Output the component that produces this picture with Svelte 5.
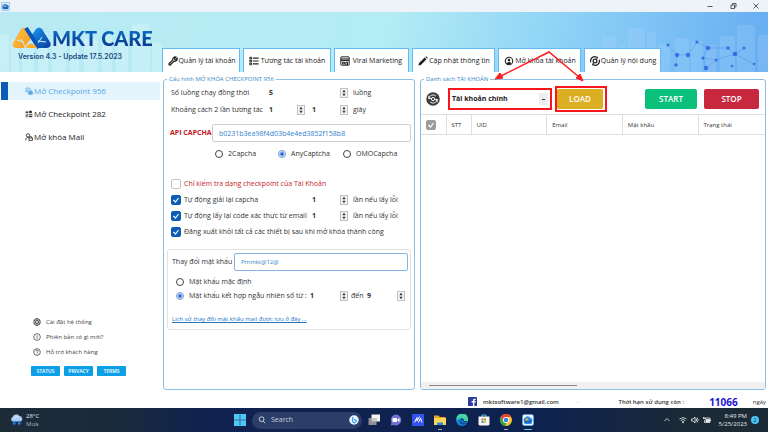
<script lang="ts">
	const tabs = [
		{ icon: 'wrench', label: 'Quản lý tài khoản', width: 78 },
		{ icon: 'list', label: 'Tương tác tài khoản', width: 88 },
		{ icon: 'store', label: 'Viral Marketing', width: 75 },
		{ icon: 'pencil', label: 'Cập nhật thông tin', width: 83 },
		{ icon: 'user', label: 'Mở khóa tài khoản', width: 83 },
		{ icon: 'sync', label: 'Quản lý nội dung', width: 77 }
	];

	const menu = [
		{ icon: 'copyLock', label: 'Mở Checkpoint 956' },
		{ icon: 'blocks', label: 'Mở Checkpoint 282' },
		{ icon: 'userLock', label: 'Mở khóa Mail' }
	];

	const helpLinks = [
		{ icon: 'gear', label: 'Cài đặt hệ thống' },
		{ icon: 'info', label: 'Phiên bản có gì mới?' },
		{ icon: 'help', label: 'Hỗ trợ khách hàng' }
	];

	const providers = ['2Capcha', 'AnyCaptcha', 'OMOCapcha'];
	const columns = ['STT', 'UID', 'Email', 'Mật khẩu', 'Trạng thái'];

	// x, y, width of each tower in the header skyline
	const towersLeft = [[0, 22, 9], [11, 27, 8], [22, 30, 12], [38, 20, 10], [52, 24, 14], [70, 30, 9], [84, 27, 14], [102, 23, 10], [116, 25, 12], [132, 12, 18], [152, 30, 10]];
	const towersRight = [[2, 24, 14], [18, 33, 8], [28, 16, 17], [47, 20, 9], [58, 32, 12], [75, 26, 14], [91, 29, 12], [106, 33, 10], [120, 24, 15], [137, 13, 18], [158, 23, 13]];
	const nodes = [[68, 33, 1.6], [77, 43, 2.2], [88, 43, 2.2], [97, 30, 1.6], [108, 36, 2.3], [76, 53, 1.8], [103, 46, 1.6], [106, 56, 2.3], [116, 48, 1.5], [128, 36, 1.8], [135, 42, 2.3], [144, 36, 1.6], [132, 54, 1.3], [154, 52, 1.3]];

	let selected = $state(0);
	let provider = $state('AnyCaptcha');
	let mode = $state('random');
	let apiKey = $state('b0231b3ea98f4d03b4e4ed3852f158b8');
	let password = $state('Pmmkt@12@');
	let onlyCheck = $state(false);
	let solveAgain = $state(true);
	let codeAgain = $state(true);
	let logoutAll = $state(true);
	let selectAll = $state(true);
	let values = $state({ threads: 5, from: 1, to: 1, solve: 1, code: 1, min: 1, max: 9 });
</script>

{#snippet glyph(name: string)}
	<svg class="glyph" viewBox="0 0 24 24" fill="none" stroke="currentColor" stroke-width="2.4" aria-hidden="true">
		{#if name === 'wrench'}
			<path d="M3 18 11.5 9.500A6 6 0 0 1 19 2.500L15.500 6l.5 2.500 2.500.5L22 5.500A6 6 0 0 1 14.500 12.500L6 21a2 2 0 0 1-3-3Z" stroke-width="2.8" />
		{:else if name === 'list'}
			<path d="M2 3h4v4H2zM2 10h4v4H2zM2 17h4v4H2z" />
			<path d="M9 5h14M9 12h14M9 19h14" stroke-width="2.8" />
		{:else if name === 'store'}
			<rect x="2" y="2" width="20" height="20" rx="1" />
			<path d="M2 7h20M2 11h20M6 15h5v4H6zM14 22v-7h4v7" />
			<path d="M5 8v3M10 8v3M15 8v3M19 8v3" />
		{:else if name === 'pencil'}
			<path d="m1 23 1.500-6L16 3.500 20.500 8 7 21.500ZM17.500 2l2-1.500L23.500 4.500 22 6.500Z" fill="currentColor" stroke="none" />
		{:else if name === 'user'}
			<circle cx="12" cy="12" r="9" stroke-width="2.6" />
			<circle cx="12" cy="9.500" r="3.200" fill="currentColor" stroke="none" />
			<path d="M6.500 18c1-5 10-5 11 0-3 3-8 3-11 0Z" fill="currentColor" stroke="none" />
		{:else if name === 'sync'}
			<circle cx="12" cy="12" r="4.500" stroke-width="3" />
			<path d="M2 15A10 10 0 0 1 16 2.800M22 9A10 10 0 0 1 8 21.200M2 9l3-5M22 15l-3 5M16 7l2-5M8 17l-2 5" stroke-width="2.8" />
		{:else if name === 'copyLock'}
			<path d="M3 16V3h9l4 4v2M7 16V9h6" />
			<rect x="11" y="13" width="11" height="9" rx="1" fill="currentColor" />
			<path d="M14 13v-2a3 3 0 0 1 5 0v2" />
		{:else if name === 'blocks'}
			<path d="M2 4h8v6H2zM12 2h9v8h-9zM2 12h8v10H2zM12 12h10v10H12z" fill="currentColor" stroke="#fff" stroke-width="1" />
			<path d="M6 12v10M12 16h10" stroke="#fff" />
		{:else if name === 'userLock'}
			<circle cx="9" cy="7" r="5" />
			<path d="M2 22c0-7 4-9 9-9" />
			<rect x="12" y="15" width="10" height="7" />
			<path d="M14 15v-2a3 3 0 0 1 6 0v2" />
		{:else if name === 'gear'}
			<path d="m12 1 9 5.500v11L12 23l-9-5.500v-11Z" stroke-width="3" />
			<circle cx="12" cy="12" r="4.500" stroke-width="3" />
			<path d="m4 7 4 2M20 7l-4 2M4 17l4-2M20 17l-4-2M12 2v5M12 17v5" />
		{:else if name === 'info'}
			<circle cx="12" cy="12" r="10" />
			<path d="M12 10v7M12 6v2" />
		{:else if name === 'help'}
			<circle cx="12" cy="12" r="10" />
			<path d="M8.500 10a3.500 3.500 0 1 1 5 3c-1 .6-1.500 1-1.500 2M12 17v2" />
		{/if}
	</svg>
{/snippet}

{#snippet stepper(key: keyof typeof values, label: string)}
	<input class="number" type="number" aria-label={label} bind:value={values[key]} />
	<span class="spin">
		<button aria-label="Tăng" onclick={() => values[key]++}><svg viewBox="0 0 6 5"><path d="m3 1 2 3H1Z" /></svg></button>
		<button aria-label="Giảm" onclick={() => values[key]--}><svg viewBox="0 0 6 5"><path d="M1 1h4L3 4Z" /></svg></button>
	</span>
{/snippet}

{#snippet careLogo()}
	<svg class="care" viewBox="0 0 16 16" aria-hidden="true">
		<rect x="0.5" y="0.5" width="15" height="15" rx="3" fill="#eaf5ff" stroke="#4c9fe4" />
		<path d="M3 10a3 3 0 0 1 1-5 4 4 0 0 1 7 0 3 3 0 0 1 2 5Z" fill="#2c8be8" />
		<rect x="3" y="8" width="10" height="5" rx="1" fill="#1668c8" />
		<path d="M4 8.500 6.500 5 9 8.500Z" fill="#ffb52e" />
	</svg>
{/snippet}

<div class="app">
	<div class="titlebar">
		{@render careLogo()}
		<div class="window-buttons">
			<button aria-label="Minimize"><svg viewBox="0 0 8 8"><path d="M1.500 4.500h5" /></svg></button>
			<button aria-label="Restore"><svg viewBox="0 0 8 8"><path d="M2 3h3.500v3.500H2zM3.500 3V1.500h3.500V5H5.500" /></svg></button>
			<button aria-label="Close"><svg viewBox="0 0 8 8"><path d="m1.500 1.500 5 5M6.500 1.500l-5 5" /></svg></button>
		</div>
	</div>

	<header>
		<svg class="skyline left" viewBox="0 0 164 60" aria-hidden="true">
			{#each towersLeft as [x, y, w]}
				<rect {x} {y} width={w} height={60 - y} rx="3" />
			{/each}
		</svg>
		<svg class="skyline right" viewBox="0 0 168 60" aria-hidden="true">
			{#each towersRight as [x, y, w]}
				<rect {x} {y} width={w} height={60 - y} rx="2" />
			{/each}
			<path d="m68 33 9 10h11l9-13 11 6-5 10 3 10M77 43l-1 10M108 36l20 0 7 6 9-6M103 46l13 2 19-6 19 10M106 56l10-8" />
			{#each nodes as [cx, cy, r]}
				<circle {cx} {cy} {r} />
			{/each}
		</svg>

		<div class="brand">
			<div class="brand-name">
				<svg viewBox="0 0 40 22" aria-hidden="true">
					<defs>
						<linearGradient id="gold" x1="0" y1="0" x2="1" y2="1"><stop stop-color="#ffc247" /><stop offset="1" stop-color="#f79a1e" /></linearGradient>
						<linearGradient id="blue" x1="0" y1="0" x2="1" y2="1"><stop stop-color="#1c9cf0" /><stop offset="1" stop-color="#0a3a9c" /></linearGradient>
					</defs>
					<path d="M9 2q3-3 6 0l5 8-8 11H4q-5-1-3-5Z" fill="url(#gold)" />
					<path d="M24 2q3-3 6 0l8 13q2 5-3 6h-8L19 9Z" fill="url(#blue)" />
					<path d="M14 1 27 21" stroke="#0a56b8" stroke-width="4" />
					<path d="M13 21q6-9 12 0Z" fill="#ffae2b" />
					<path d="m9 12 5 9M5 13l7 2M30 10l-4 6M26 14l8 1" stroke="#c8eef8" stroke-width="1" fill="none" />
				</svg>
				<strong>MKT CARE</strong>
			</div>
			<p>Version 4.3 - Update 17.5.2023</p>
		</div>

		<nav class="tabs">
			{#each tabs as tab}
				<button class="tab" style="width: {tab.width}px">
					{@render glyph(tab.icon)}
					<span>{tab.label}</span>
				</button>
			{/each}
		</nav>
	</header>

	<div class="body">
		<aside>
			<nav class="menu">
				{#each menu as item, i}
					<button class:active={selected === i} onclick={() => (selected = i)}>
						{@render glyph(item.icon)}
						{item.label}
					</button>
				{/each}
			</nav>
			<div class="support">
				{#each helpLinks as link}
					<a href="#help">{@render glyph(link.icon)}{link.label}</a>
				{/each}
				<div class="pills">
					<button>STATUS</button>
					<button>PRIVACY</button>
					<button>TERMS</button>
				</div>
			</div>
		</aside>

		<main>
			<fieldset class="panel config">
				<legend>Cấu hình MỞ KHÓA CHECKPOINT 956</legend>

				<div class="row settings">
					<span class="name">Số luồng chạy đồng thời</span>
					<span class="wide">{@render stepper('threads', 'Số luồng chạy đồng thời')}</span>
					<span class="unit">luồng</span>
				</div>
				<div class="row settings">
					<span class="name">Khoảng cách 2 lần tương tác</span>
					<span class="half">{@render stepper('from', 'Khoảng cách từ')}</span>
					<span class="half">{@render stepper('to', 'Khoảng cách đến')}</span>
					<span class="unit">giây</span>
				</div>

				<div class="api">
					<label for="api">API CAPCHA</label>
					<input id="api" type="text" bind:value={apiKey} />
				</div>

				<div class="providers">
					{#each providers as name}
						<label><input type="radio" name="provider" value={name} bind:group={provider} />{name}</label>
					{/each}
				</div>

				<div class="row">
					<label class="check warn"><input type="checkbox" bind:checked={onlyCheck} />Chỉ kiểm tra dạng checkpoint của Tài Khoản</label>
				</div>
				<div class="row">
					<label class="check"><input type="checkbox" bind:checked={solveAgain} />Tự động giải lại capcha</label>
					<span class="half">{@render stepper('solve', 'Số lần giải lại')}</span>
					<span class="unit">lần nếu lấy lỗi</span>
				</div>
				<div class="row">
					<label class="check"><input type="checkbox" bind:checked={codeAgain} />Tự động lấy lại code xác thực từ email</label>
					<span class="half">{@render stepper('code', 'Số lần lấy lại code')}</span>
					<span class="unit">lần nếu lấy lỗi</span>
				</div>
				<div class="row">
					<label class="check"><input type="checkbox" bind:checked={logoutAll} />Đăng xuất khỏi tất cả các thiết bị sau khi mở khóa thành công</label>
				</div>

				<div class="password">
					<div class="password-field">
						<label for="password">Thay đổi mật khẩu</label>
						<input id="password" type="text" bind:value={password} />
					</div>
					<div class="choice">
						<label><input type="radio" name="mode" value="default" bind:group={mode} />Mật khẩu mặc định</label>
					</div>
					<div class="choice">
						<label><input type="radio" name="mode" value="random" bind:group={mode} />Mật khẩu kết hợp ngẫu nhiên số từ :</label>
						<span class="range">{@render stepper('min', 'Số từ')}</span>
						<span class="until">đến</span>
						<span class="range">{@render stepper('max', 'Số đến')}</span>
					</div>
					<a href="#history">Lịch sử thay đổi mật khẩu mail được lưu ở đây ...</a>
				</div>
			</fieldset>

			<fieldset class="panel accounts">
				<legend>Danh sách TÀI KHOẢN</legend>
				<div class="toolbar">
					<button class="refresh" aria-label="Tải lại">
						<svg viewBox="0 0 30 30">
							<circle cx="15" cy="15" r="14.500" fill="#3c3c3c" />
							<path d="M6 15a9 9 0 0 1 15-6.500M24 15a9 9 0 0 1-15 6.500M6 8v6h5M24 22v-6h-5" fill="none" stroke="#fff" stroke-width="2" />
							<circle cx="15" cy="15" r="3.500" fill="none" stroke="#fff" stroke-width="2" />
						</svg>
					</button>
					<div class="mark select-wrap">
						<select aria-label="Danh sách tài khoản"><option>Tài khoản chính</option></select>
					</div>
					<div class="mark load"><button class="action">LOAD</button></div>
					<button class="action start">START</button>
					<button class="action stop">STOP</button>
				</div>

				<table>
					<thead>
						<tr>
							<th class="tick"><input type="checkbox" aria-label="Chọn tất cả" bind:checked={selectAll} /></th>
							{#each columns as column}
								<th class:index={column === 'STT'}>{column}</th>
							{/each}
						</tr>
					</thead>
				</table>
				<div class="scroll"><span></span></div>

				<!-- callout from the unlock tab to the account list and LOAD -->
				<svg class="callout" viewBox="0 0 96 34" aria-hidden="true">
					<path d="M8 27 58 2 88 27" fill="none" stroke="#ff1a1f" stroke-width="1.500" />
					<path d="m4 29 5-6 3 5ZM92 31l-7-3 4-4Z" fill="#ff1a1f" stroke="#ff1a1f" />
				</svg>
			</fieldset>
		</main>
	</div>

	<footer>
		<svg class="facebook" viewBox="0 0 20 20" aria-hidden="true">
			<rect width="20" height="20" rx="1" fill="#2d3f9e" />
			<path d="M11 20v-8H8V9h3V7q0-4 6-3v2.500c-3 0-3 0-3 2.500h3l-.5 3H14v8Z" fill="#fff" />
		</svg>
		<strong>mktsoftware1@gmail.com</strong>
		<span class="dot">·</span>
		<span class="expiry">Thời hạn sử dụng còn :</span>
		<b class="days">11066</b>
		<span class="ngay">ngày</span>
	</footer>

	<div class="taskbar">
		<div class="weather">
			<svg viewBox="0 0 26 24" aria-hidden="true">
				<path d="M5 15a5 5 0 0 1 0-9 8 8 0 0 1 14-2 6 6 0 0 1 3 11Z" fill="#a9cdf8" />
				<path d="M9 10a5 5 0 0 1 9-3" fill="none" stroke="#dcebff" stroke-width="2" />
				<path d="m8 13-2 4a3 3 0 1 0 5 0ZM18 13l-2 4a3 3 0 1 0 5 0Z" fill="#1979e6" />
			</svg>
			<div><span>28°C</span><small>Mưa</small></div>
		</div>
		<div class="dock">
			<button aria-label="Start">
				<svg viewBox="0 0 24 24"><path d="M0 0h11.500v11.500H0zM12.500 0H24v11.500H12.500zM0 12.500h11.500V24H0zM12.500 12.500H24V24H12.500z" fill="#4fc8f4" /></svg>
			</button>
			<label class="search">
				<svg viewBox="0 0 20 20"><circle cx="9" cy="8" r="6" /><path d="m13 13 5 5" /></svg>
				<input type="text" placeholder="Search" aria-label="Search" />
				<svg class="bing" viewBox="0 0 20 20"><circle cx="10" cy="10" r="9.500" fill="#e4f5ff" stroke="none" /><path d="M7.500 4v10l3 2 4-2.500v-3L10 9" stroke="#1688dc" /></svg>
			</label>
			<button aria-label="Task view">
				<svg viewBox="0 0 24 24"><path d="M7 1h17v14H7z" fill="#f4f4f4" /><path d="M1 8h16v14H1z" fill="#8d8f94" /><path d="M7 8h10v7H7z" fill="#c5c6c8" /></svg>
			</button>
			<button aria-label="Chat">
				<svg viewBox="0 0 24 24"><path d="M12 1a11 11 0 1 1-5 21l-6 1 2-6A11 11 0 0 1 12 1Z" fill="#7370cf" /><rect x="5" y="8" width="9" height="8" rx="1" fill="#fff" /><path d="m15 11 4-3v8l-4-3Z" fill="#fff" /></svg>
			</button>
			<button aria-label="MKT">
				<svg viewBox="0 0 24 24"><rect width="24" height="24" fill="#3452ee" /><path d="m5 17 5-10v7l5-9M13 17l4-9 3 9" fill="none" stroke="#fff" stroke-width="2" /></svg>
			</button>
			<button class="open" aria-label="Explorer">
				<svg viewBox="0 0 24 24"><path d="M0 3h9l3 3h11v15H0z" fill="#e7a520" /><path d="M0 8h24v14H0z" fill="#ffd45b" /><path d="M6 17h12v5H6z" fill="#278ee3" /></svg>
			</button>
			<button aria-label="Edge">
				<svg viewBox="0 0 24 24"><circle cx="12" cy="12" r="12" fill="#1187d4" /><path d="M1 9a11.500 11.500 0 0 1 23 2c0 5-7 6-9 3 3-4-3-8-8-5-4 2-6 5-6 0Z" fill="#42d6a4" /><path d="M9 11c-4 5 0 11 7 10 3 0 5-2 6-4-6 2-12 0-13-6Z" fill="#0b4e9e" /><path d="M10 10q5-1 5 4 3 2 6 1" stroke="#0d255b" stroke-width="2" fill="none" /></svg>
			</button>
			<button aria-label="Store">
				<svg viewBox="0 0 24 24"><path d="M8 6V2h8v4" fill="none" stroke="#58b9f0" stroke-width="2" /><path d="M1 5h22v15q0 3-3 3H4q-3 0-3-3Z" fill="#f4f4f4" /><path d="M7 9h4v4H7z" fill="#ee5630" /><path d="M12 9h4v4h-4z" fill="#7bb82b" /><path d="M7 14h4v4H7z" fill="#2797df" /><path d="M12 14h4v4h-4z" fill="#f8b82b" /></svg>
			</button>
			<button class="open" aria-label="Chrome">
				<svg viewBox="0 0 24 24"><circle cx="12" cy="12" r="12" fill="#f9c42d" /><path d="M1.600 6A12 12 0 0 1 22.400 6H12l-5 9Z" fill="#e84335" /><path d="M1.600 6 8 16l4 2-1 6A12 12 0 0 1 1.600 6Z" fill="#2fa450" /><circle cx="12" cy="12" r="6" fill="#fff" /><circle cx="12" cy="12" r="4.500" fill="#397ee8" /></svg>
			</button>
			<button class="open current" aria-label="MKT Care">{@render careLogo()}</button>
		</div>
		<div class="tray">
			<svg viewBox="0 0 16 16"><path d="m3 10 5-5 5 5" /></svg>
			<svg class="wifi" viewBox="0 0 16 16"><path d="M1 6q7-6 14 0M3.500 9q4.500-4 9 0M6 12q2-2 4 0" /><circle cx="8" cy="13" r="1" /></svg>
			<svg viewBox="0 0 16 16"><path d="M1 6h3l4-4v12l-4-4H1ZM10 5q3 3 0 6M12 3q5 5 0 10" /></svg>
			<svg viewBox="0 0 16 16"><path d="M5 4h9v9H3V9M15 7v3" /><path d="M6 7h7v5H6z" fill="#e8ecef" /><path d="M1 2v3M4 2v3M0 5h5v2l-2 2" /></svg>
			<div class="clock"><span>8:49 PM</span><span>5/25/2023</span></div>
			<span class="badge">2</span>
		</div>
	</div>
</div>

<style>
	:global(body) {
		margin: 0;
		background: #fff;
	}

	.app {
		min-height: 100vh;
		display: flex;
		flex-direction: column;
		font: 7px/10px 'Open Sans', 'Noto Sans', sans-serif;
		color: #333;
	}

	.app :global(*) {
		box-sizing: border-box;
	}

	button,
	input,
	select {
		font: inherit;
		color: inherit;
		margin: 0;
		padding: 0;
		border: 0;
		background: none;
	}

	input:focus,
	select:focus {
		outline: none;
	}

	svg {
		display: block;
		flex: none;
	}

	.glyph {
		width: 8px;
		height: 8px;
	}

	.care {
		width: 9px;
		height: 9px;
	}

	.titlebar {
		height: 12px;
		display: flex;
		align-items: center;
		justify-content: space-between;
		padding: 0 8px 0 1px;
		background: #eef2f9;
	}

	.window-buttons {
		display: flex;
		gap: 15px;
	}

	.window-buttons button {
		width: 8px;
		height: 8px;
	}

	.window-buttons path {
		fill: none;
		stroke: #333;
		stroke-width: 0.8;
	}

	header {
		position: relative;
		height: 60px;
		display: flex;
		background: linear-gradient(100deg, #b9eaf4 0%, #b3ecf4 50%, #8fd3f6 72%, #66adf2 100%);
	}

	.skyline {
		position: absolute;
		bottom: 0;
		height: 60px;
	}

	.skyline.left {
		left: 0;
		width: 164px;
		fill: rgba(226, 248, 252, 0.35);
	}

	.skyline.right {
		right: 0;
		width: 168px;
		fill: rgba(170, 212, 252, 0.25);
	}

	.skyline circle {
		fill: #2a5fe0;
		opacity: 0.8;
	}

	.skyline path {
		fill: none;
		stroke: #4b86e8;
		stroke-width: 0.4;
	}

	.brand {
		position: relative;
		width: 162px;
		padding: 15px 0 0 12px;
	}

	.brand-name {
		display: flex;
		align-items: center;
		height: 22px;
	}

	.brand-name svg {
		width: 40px;
		height: 22px;
	}

	.brand-name strong {
		font: 900 20px/24px Lato, sans-serif;
		white-space: nowrap;
		background: linear-gradient(#0b7cd0, #0b3f97 70%);
		background-clip: text;
		color: transparent;
	}

	.brand p {
		margin: 3px 0 0 6px;
		font: 600 7px/10px Inter, sans-serif;
		color: #16477e;
		white-space: nowrap;
	}

	.tabs {
		position: relative;
		display: flex;
		align-items: flex-end;
		gap: 3px;
	}

	.tab {
		height: 24px;
		display: flex;
		align-items: center;
		padding: 0 3px 0 5px;
		border: 1px solid #61b9f7;
		border-bottom: 0;
		background: #fff;
		color: #222;
		font-weight: 500;
		white-space: nowrap;
	}

	.tab span {
		flex: 1;
		text-align: center;
	}

	.tab .glyph {
		width: 10px;
		height: 10px;
	}

	.body {
		flex: 1;
		display: flex;
		padding-bottom: 1px;
	}

	aside {
		width: 160px;
		flex: none;
		display: flex;
		flex-direction: column;
		justify-content: space-between;
		padding: 10px 0 14px;
	}

	.menu {
		display: flex;
		flex-direction: column;
		gap: 5px;
		padding-left: 1px;
	}

	.menu button {
		height: 18px;
		display: flex;
		align-items: center;
		gap: 1px;
		padding-left: 17px;
		border-left: 7px solid transparent;
		font-size: 8px;
		text-align: left;
		color: #222;
	}

	.menu .active {
		border-left-color: #0a5cb5;
		background: #e3f4fd;
		color: #59a8e6;
	}

	.support {
		display: flex;
		flex-direction: column;
		gap: 5px;
		padding-left: 31px;
	}

	.support a {
		display: flex;
		align-items: center;
		gap: 5px;
		padding-left: 2px;
		color: #444;
		text-decoration: none;
		font-size: 6px;
	}

	.pills {
		display: flex;
		gap: 4px;
		margin-top: 4px;
	}

	.pills button {
		width: 29px;
		height: 10px;
		border-radius: 1px;
		background: #0c9fe8;
		color: #fff;
		font-size: 5px;
		font-weight: 600;
	}

	main {
		flex: 1;
		display: grid;
		grid-template-columns: 252fr 346fr;
		gap: 5px;
		padding: 2px 2px 0 3px;
	}

	.panel {
		min-width: 0;
		margin: 0;
		padding: 0;
		border: 1px solid #8cbfe6;
		border-radius: 3px;
	}

	legend {
		margin-left: 3px;
		padding: 0 2px;
		color: #3a87c8;
		font-size: 6px;
		font-weight: 500;
		line-height: 10px;
	}

	.config {
		padding: 0 3px;
	}

	.config legend {
		margin-left: 0;
	}

	.row {
		display: flex;
		align-items: center;
		height: 16px;
		padding-left: 4px;
		white-space: nowrap;
	}

	.settings {
		height: 17px;
	}

	.name {
		width: 98px;
	}

	.wide,
	.half,
	.range {
		display: flex;
		align-items: center;
		justify-content: space-between;
	}

	.wide {
		width: 79px;
	}

	.half {
		width: 36px;
	}

	.half + .half {
		margin-left: 7px;
	}

	.unit {
		margin-left: 5px;
	}

	.number {
		width: 12px;
		flex: none;
		appearance: textfield;
		font-weight: 700;
	}

	.number::-webkit-inner-spin-button {
		display: none;
	}

	.spin {
		display: flex;
		flex-direction: column;
		width: 8px;
		border: 1px solid #c3c3c3;
		background: #f3f3f3;
	}

	.spin button {
		width: 6px;
		height: 4px;
	}

	.spin svg {
		width: 6px;
		height: 4px;
		fill: #333;
	}

	.api {
		display: flex;
		align-items: center;
		margin-top: 6px;
		padding-left: 3px;
	}

	.api label {
		width: 42px;
		color: #c4151c;
		font-weight: 700;
		white-space: nowrap;
	}

	.api input,
	.password-field input {
		flex: 1;
		min-width: 0;
		height: 18px;
		padding: 0 6px;
		border: 1px solid #cfcfcf;
		border-radius: 2px;
		color: #3383cc;
	}

	.providers {
		display: grid;
		grid-template-columns: 63px 65px auto;
		margin: 7px 0 17px 48px;
	}

	.providers label,
	.choice label {
		display: flex;
		align-items: center;
		gap: 5px;
	}

	[type='radio'] {
		appearance: none;
		width: 8px;
		height: 8px;
		flex: none;
		border: 1px solid #444;
		border-radius: 50%;
	}

	[type='radio']:checked {
		border-color: #6b98dd;
		background: radial-gradient(#2c68cc 0 1px, #fff 3px);
	}

	.check {
		width: 141px;
		display: flex;
		align-items: center;
		gap: 3px;
	}

	.warn {
		color: #c4252b;
		font-weight: 500;
	}

	[type='checkbox'] {
		appearance: none;
		width: 10px;
		height: 10px;
		flex: none;
		border: 1px solid #c2c2c2;
		border-radius: 2px;
	}

	[type='checkbox']:checked {
		border-color: #0b5eb5;
		background: #0b5eb5 url("data:image/svg+xml,%3Csvg xmlns='http://www.w3.org/2000/svg' viewBox='0 0 8 8'%3E%3Cpath d='m1.500 4 2 2 3-4' fill='none' stroke='white' stroke-width='1.200'/%3E%3C/svg%3E");
	}

	.password {
		margin-top: 9px;
		padding: 3px 2px 5px 4px;
		border: 1px solid #e2e2e2;
		border-radius: 3px;
		white-space: nowrap;
	}

	.password-field {
		display: flex;
		align-items: center;
		margin-bottom: 4px;
	}

	.password-field label {
		width: 62px;
	}

	.password-field input {
		border-color: #86b4e2;
		font-size: 6px;
	}

	.choice {
		display: flex;
		align-items: center;
		height: 14px;
		padding-left: 4px;
	}

	.choice label {
		width: 134px;
	}

	.range {
		width: 38px;
	}

	.until {
		width: 19px;
		padding-left: 3px;
	}

	.password a {
		display: block;
		margin-top: 11px;
		color: #2474c4;
		font-size: 6px;
	}

	.accounts {
		position: relative;
		display: flex;
		flex-direction: column;
	}

	.toolbar {
		display: flex;
		align-items: center;
		padding: 2px 6px 2px 5px;
	}

	.refresh {
		width: 14px;
		height: 14px;
		margin-right: 8px;
	}

	.mark {
		border: 2px solid #f8161c;
	}

	.select-wrap {
		width: 104px;
		height: 22px;
	}

	select {
		width: 100%;
		height: 18px;
		padding-left: 2px;
		appearance: none;
		color: #222;
		font-weight: 700;
		background: linear-gradient(#333 0 0) right 5px center / 3px 1px no-repeat, linear-gradient(#eee 0 0) right 2px center / 9px 12px no-repeat, #fff;
	}

	.load {
		width: 52px;
		height: 26px;
		margin: 0 auto 0 3px;
		padding: 1px 2px 1px 0;
	}

	.action {
		height: 20px;
		border-radius: 2px;
		color: #fff;
		font-size: 8px;
		font-weight: 600;
	}

	.load .action {
		width: 100%;
		background: #dcae22;
	}

	.start {
		width: 52px;
		margin-right: 7px;
		background: #0bc07a;
	}

	.stop {
		width: 55px;
		background: #c8283e;
	}

	table {
		width: 100%;
		table-layout: fixed;
		border-collapse: collapse;
		font-size: 6px;
	}

	th {
		width: 22%;
		height: 20px;
		padding: 0 0 0 5px;
		border: 1px solid #dedede;
		border-width: 1px 0 1px 1px;
		font-weight: 500;
		text-align: left;
	}

	th.tick {
		width: 25px;
		border-left: 0;
	}

	th.index {
		width: 25px;
	}

	th:last-child {
		width: auto;
	}

	th input {
		display: block;
	}

	th [type='checkbox']:checked {
		border-color: #9c9c9c;
		background-color: #9c9c9c;
	}

	.scroll {
		height: 7px;
		margin-top: auto;
		padding: 3px 188px 0 8px;
		background: #f0f0f0;
	}

	.scroll span {
		display: block;
		height: 1px;
		background: #888;
	}

	.callout {
		position: absolute;
		top: -34px;
		left: 70px;
		width: 96px;
		height: 34px;
		z-index: 2;
		pointer-events: none;
	}

	footer {
		height: 17px;
		display: flex;
		align-items: center;
		padding: 4px 2px 0 468px;
		font-size: 6px;
		white-space: nowrap;
	}

	footer strong {
		font-weight: 600;
	}

	.facebook {
		width: 9px;
		height: 9px;
		margin-right: 6px;
	}

	.dot {
		margin: 0 auto 0 18px;
	}

	.expiry {
		margin-right: 25px;
		font-weight: 600;
	}

	.days {
		margin-right: 15px;
		font-size: 10px;
		color: #1b12d2;
	}

	.taskbar {
		height: 24px;
		display: grid;
		grid-template-columns: 1fr auto 1fr;
		align-items: center;
		background: linear-gradient(90deg, #1d2c37, #1a2a3c 15%, #0f2250 28%, #0e2250 70%, #1b2a35 90%);
		color: #e8ecef;
	}

	.weather {
		display: flex;
		align-items: center;
		gap: 3px;
		padding-left: 10px;
		font-size: 6px;
		line-height: 8px;
	}

	.weather svg {
		width: 13px;
		height: 12px;
	}

	.weather span,
	.weather small {
		display: block;
		font-size: 6px;
	}

	.weather small {
		color: #aab4bc;
	}

	.dock {
		display: flex;
		align-items: center;
		gap: 10px;
	}

	.dock button {
		position: relative;
		width: 12px;
		height: 12px;
	}

	.dock button .care {
		width: 12px;
		height: 12px;
	}

	.dock .open::after {
		content: '';
		position: absolute;
		left: 4px;
		bottom: -4px;
		width: 4px;
		height: 1px;
		background: #a0a8b4;
	}

	.dock .current::after {
		left: 2px;
		width: 8px;
		background: #55c8f5;
	}

	.search {
		display: flex;
		align-items: center;
		gap: 5px;
		width: 110px;
		height: 17px;
		margin: 0 -4px;
		padding: 0 3px 0 6px;
		border-radius: 9px;
		background: #2c3e68;
	}

	.search svg {
		width: 8px;
		height: 8px;
		fill: none;
		stroke: #e8ecef;
		stroke-width: 2;
	}

	.search input {
		flex: 1;
		min-width: 0;
	}

	.search input::placeholder {
		color: #c6cedb;
	}

	.search .bing {
		width: 10px;
		height: 10px;
	}

	.tray {
		display: flex;
		align-items: center;
		justify-content: flex-end;
		gap: 4px;
		padding-right: 9px;
		font-size: 6px;
		line-height: 8px;
	}

	.tray svg {
		width: 8px;
		height: 8px;
		fill: none;
		stroke: #e8ecef;
		stroke-width: 1.600;
	}

	.tray .wifi {
		margin-left: 4px;
	}

	.clock {
		display: flex;
		flex-direction: column;
		align-items: flex-end;
		margin-left: 4px;
	}

	.badge {
		width: 8px;
		height: 8px;
		border-radius: 50%;
		background: #4cc2f5;
		color: #123;
		font-size: 5px;
		text-align: center;
	}
</style>
